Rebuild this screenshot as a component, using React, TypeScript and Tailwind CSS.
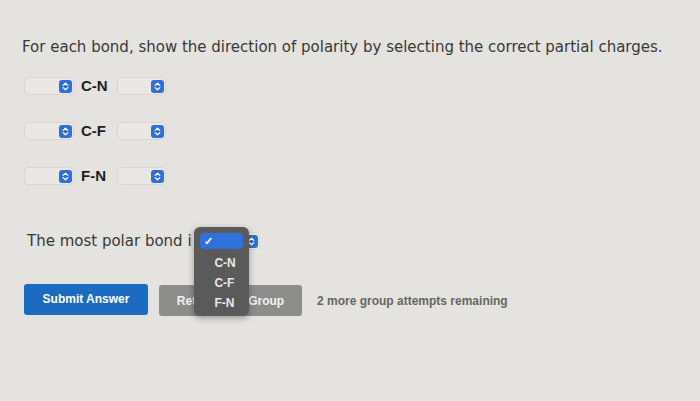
import React from 'react';

const rows = [
  { id: 'cn', label: 'C-N' },
  { id: 'cf', label: 'C-F' },
  { id: 'fn', label: 'F-N' },
];

const StepperIcon: React.FC = () => (
  <div className="w-[13px] h-[13px] rounded-[3px] bg-[#2f6fd6] flex items-center justify-center">
    <svg width="7" height="9" viewBox="0 0 7 9" fill="none">
      <path d="M1.2 3.4 L3.5 1.2 L5.8 3.4" stroke="white" strokeWidth="1.3" strokeLinecap="round" strokeLinejoin="round" />
      <path d="M1.2 5.6 L3.5 7.8 L5.8 5.6" stroke="white" strokeWidth="1.3" strokeLinecap="round" strokeLinejoin="round" />
    </svg>
  </div>
);

const ChargeSelect: React.FC<{ width: string }> = ({ width }) => (
  <div className={`${width} h-[18px] rounded-[4px] border border-[#d8d6d1] bg-[#e9e8e4] flex items-center justify-end pr-[1px]`}>
    <StepperIcon />
  </div>
);

const BondRow: React.FC<{ label: string }> = ({ label }) => (
  <div className="flex items-center h-[18px]">
    <ChargeSelect width="w-[50px]" />
    <span className="ml-[7px] w-[36px] font-['Liberation_Sans',Arial,sans-serif] font-bold text-[15px] text-[#1e1e1e]">{label}</span>
    <ChargeSelect width="w-[49px]" />
  </div>
);

export default function App() {
  return (
    <div className="w-[700px] h-[401px] overflow-hidden bg-[#e5e3df] pl-[22px] pt-[37px] font-['DejaVu_Sans',Verdana,sans-serif]">
      <p className="text-[15px] leading-[20px] text-[#383838]">
        For each bond, show the direction of polarity by selecting the correct partial charges.
      </p>

      <div className="mt-[20px] pl-[2px] flex flex-col gap-[27px]">
        {rows.map((r) => (
          <BondRow key={r.id} label={r.label} />
        ))}
      </div>

      <div className="mt-[46px] pl-[5px] flex items-center h-[20px]">
        <span className="text-[15px] text-[#383838] whitespace-nowrap">The most polar bond is</span>
        <div className="relative ml-[-8px]">
          <div className="w-[69px] h-[18px] rounded-[4px] border border-[#d8d6d1] bg-[#e9e8e4] flex items-center justify-end pr-[1px]">
            <StepperIcon />
          </div>
          <div className="absolute left-[3px] top-[-5px] w-[55px] h-[89px] rounded-[6px] bg-[#5a5a5a] shadow-[0_2px_6px_rgba(0,0,0,0.35)] pt-[6px] px-[6px] font-['Liberation_Sans',Arial,sans-serif] text-[12px] font-bold text-[#e9e9e9]">
            <div className="h-[16px] rounded-[4px] bg-[#2f72db] flex items-center pl-[4px] text-white text-[11px]">✓</div>
            <div className="flex flex-col pl-[14px] gap-[6px] mt-[7px] leading-[14px]">
              <span>C-N</span>
              <span>C-F</span>
              <span>F-N</span>
            </div>
          </div>
        </div>
      </div>

      <div className="mt-[31px] pl-[2px] flex items-center font-['Liberation_Sans',Arial,sans-serif] font-bold text-[12px]">
        <button className="w-[124px] h-[31px] rounded-[3px] bg-[#1b6cc1] text-white">Submit Answer</button>
        <button className="ml-[11px] w-[143px] h-[31px] mt-[3px] rounded-[3px] bg-[#8d8d8b] text-[#f2f2f2] flex items-center justify-center">
          Retry Entire Group
        </button>
        <span className="ml-[15px] mt-[3px] text-[#666664]">2 more group attempts remaining</span>
      </div>
    </div>
  );
}
